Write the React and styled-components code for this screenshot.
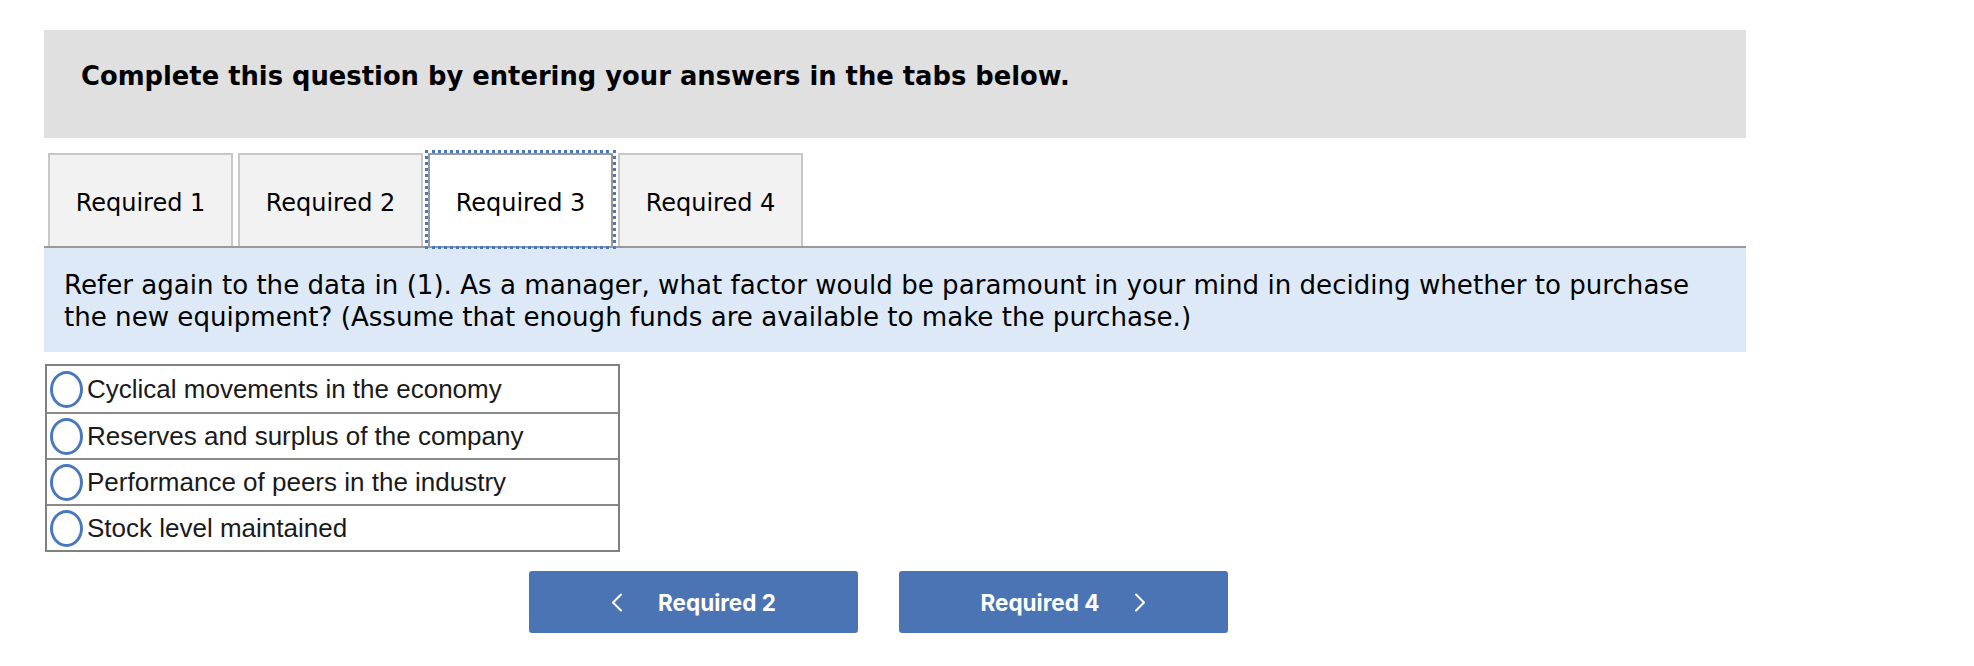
import React, { useState } from 'react';
import styled, { createGlobalStyle } from 'styled-components';

const GlobalStyle = createGlobalStyle`
    html, body {
        margin: 0;
        padding: 0;
        background: #ffffff;
    }
    * {
        box-sizing: border-box;
    }
`;

const tabs = ['Required 1', 'Required 2', 'Required 3', 'Required 4'];

const options = [
    'Cyclical movements in the economy',
    'Reserves and surplus of the company',
    'Performance of peers in the industry',
    'Stock level maintained',
];

const ChevronLeft = () => (
    <svg width="12" height="19" viewBox="0 0 12 19" fill="none">
        <polyline points="10,1.5 2,9.5 10,17.5" stroke="#ffffff" strokeWidth="2" strokeLinecap="round" strokeLinejoin="round" />
    </svg>
);

const ChevronRight = () => (
    <svg width="12" height="19" viewBox="0 0 12 19" fill="none">
        <polyline points="2,1.5 10,9.5 2,17.5" stroke="#ffffff" strokeWidth="2" strokeLinecap="round" strokeLinejoin="round" />
    </svg>
);

const App = () => {
    const [activeTab, setActiveTab] = useState(2);
    const [selected, setSelected] = useState(null);

    return (
        <>
            <GlobalStyle />
            <PageWrapper>
                <Instructions>
                    <InstructionText>Complete this question by entering your answers in the tabs below.</InstructionText>
                </Instructions>

                <TabBar>
                    {tabs.map((tab, index) => (
                        <Tab key={tab} active={index === activeTab} onClick={() => setActiveTab(index)}>
                            {tab}
                        </Tab>
                    ))}
                </TabBar>

                <QuestionBox>
                    Refer again to the data in (1). As a manager, what factor would be paramount in your mind in deciding whether to purchase the new equipment? (Assume that enough funds are available to make the purchase.)
                </QuestionBox>

                <OptionTable>
                    {options.map((option, index) => (
                        <OptionRow key={option} onClick={() => setSelected(index)}>
                            <Radio checked={selected === index} />
                            <OptionLabel>{option}</OptionLabel>
                        </OptionRow>
                    ))}
                </OptionTable>

                <NavRow>
                    <NavButton onClick={() => setActiveTab(1)}>
                        <ChevronLeft />
                        <span>Required 2</span>
                    </NavButton>
                    <NavButton onClick={() => setActiveTab(3)}>
                        <span>Required 4</span>
                        <ChevronRight />
                    </NavButton>
                </NavRow>
            </PageWrapper>
        </>
    );
};

export default App;

const PageWrapper = styled.div`
    display: flex;
    width: 1746px;
    padding: 30px 0 0 44px;
    flex-direction: column;
    font-family: "DejaVu Sans", Verdana, sans-serif;
    color: #000000;
`;

const Instructions = styled.div`
    height: 108px;
    padding: 30px 37px 0;
    background-color: #e0e0e0;
`;

const InstructionText = styled.div`
    font-size: 25.8px;
    font-weight: 700;
    line-height: 32px;
`;

const TabBar = styled.div`
    display: flex;
    margin-top: 15px;
    padding-left: 4px;
    gap: 5px;
    border-bottom: 2px solid #9a9a9a;
`;

const Tab = styled.div`
    display: flex;
    width: 185px;
    height: 93px;
    padding-top: 4px;
    align-items: center;
    justify-content: center;
    border: 2px solid ${(props) => (props.active ? '#999999' : '#c8c8c8')};
    border-bottom: none;
    background-color: ${(props) => (props.active ? '#ffffff' : '#f2f2f2')};
    outline: ${(props) => (props.active ? '3px dotted #4a78bd' : 'none')};
    font-size: 24px;
    cursor: pointer;
    position: relative;
    z-index: ${(props) => (props.active ? 1 : 0)};
`;

const QuestionBox = styled.div`
    padding: 22px 20px 19px;
    background-color: #dde9f6;
    font-size: 26.1px;
    line-height: 31.5px;
`;

const OptionTable = styled.div`
    display: flex;
    width: 575px;
    margin-top: 12px;
    margin-left: 1px;
    flex-direction: column;
    border: 2px solid #808080;
`;

const OptionRow = styled.div`
    display: flex;
    height: 46px;
    padding-left: 3px;
    align-items: center;
    gap: 4px;
    cursor: pointer;

    & + & {
        border-top: 2px solid #8a8a8a;
    }
`;

const Radio = styled.span`
    width: 33px;
    height: 37px;
    flex-shrink: 0;
    border: 3.5px solid #4a78bd;
    border-radius: 50%;
    background-color: ${(props) => (props.checked ? '#4a78bd' : '#ffffff')};
    box-shadow: ${(props) => (props.checked ? 'inset 0 0 0 5px #ffffff' : 'none')};
`;

const OptionLabel = styled.span`
    font-family: "Liberation Sans", Arial, sans-serif;
    font-size: 26px;
    color: #1a1a1a;
`;

const NavRow = styled.div`
    display: flex;
    margin-top: 19px;
    margin-left: 485px;
    gap: 41px;
`;

const NavButton = styled.button`
    display: flex;
    width: 329px;
    height: 62px;
    padding: 0;
    align-items: center;
    justify-content: center;
    gap: 35px;
    border: none;
    border-radius: 3px;
    background-color: #4a74b3;
    color: #ffffff;
    font-family: Inter, Roboto, "Liberation Sans", sans-serif;
    font-size: 22.5px;
    font-weight: 700;
    cursor: pointer;
`;
